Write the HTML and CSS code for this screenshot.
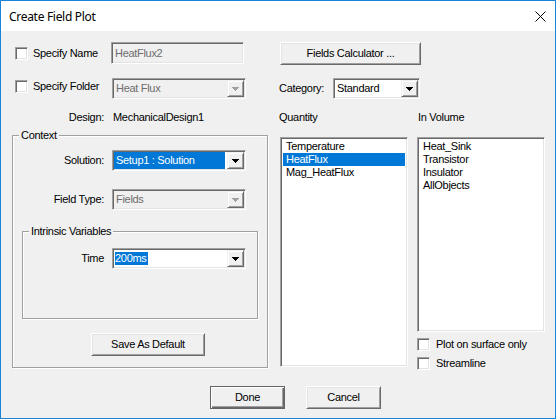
FILE: index.html
```html
<!DOCTYPE html>
<html>
<head>
<meta charset="utf-8">
<link rel="stylesheet" href="styles.css">
</head>
<body>
<div class="window">
  <div class="titlebar">
    <span class="title">Create Field Plot</span>
    <svg class="close" width="11" height="11" viewBox="0 0 11 11"><path d="M0.5 0.5 L10.5 10.5 M10.5 0.5 L0.5 10.5" stroke="#000" stroke-width="1" fill="none"/></svg>
  </div>
  <div class="body">
    <div class="left">
      <div class="row r-name">
        <label class="check"><span class="cb"></span><span>Specify Name</span></label>
        <div class="textbox disabled">HeatFlux2</div>
      </div>
      <div class="row r-folder">
        <label class="check check-top"><span class="cb"></span><span>Specify Folder</span></label>
        <div class="combo disabled shift1">
          <span class="val">Heat Flux</span>
          <span class="dd"><svg width="7" height="4" viewBox="0 0 7 4"><path d="M0 0h7v1H0zM1 1h5v1H1zM2 2h3v1H2zM3 3h1v1H3z"/></svg></span>
        </div>
      </div>
      <div class="row r-design">
        <span class="design-lbl">Design:</span>
        <span class="design-val">MechanicalDesign1</span>
      </div>
      <fieldset class="group context">
        <legend>Context</legend>
        <div class="ctx-inner">
          <div class="field-row">
            <span class="flbl">Solution:</span>
            <div class="combo">
              <span class="val sel">Setup1 : Solution</span>
              <span class="dd"><svg width="7" height="4" viewBox="0 0 7 4"><path d="M0 0h7v1H0zM1 1h5v1H1zM2 2h3v1H2zM3 3h1v1H3z"/></svg></span>
            </div>
          </div>
          <div class="field-row r-ftype">
            <span class="flbl">Field Type:</span>
            <div class="combo disabled">
              <span class="val">Fields</span>
              <span class="dd"><svg width="7" height="4" viewBox="0 0 7 4"><path d="M0 0h7v1H0zM1 1h5v1H1zM2 2h3v1H2zM3 3h1v1H3z"/></svg></span>
            </div>
          </div>
          <fieldset class="group intrinsic">
            <legend>Intrinsic Variables</legend>
            <div class="int-inner">
              <div class="field-row">
                <span class="flbl flbl-time">Time</span>
                <div class="combo">
                  <span class="val"><span class="hl">200ms</span></span>
                  <span class="dd"><svg width="7" height="4" viewBox="0 0 7 4"><path d="M0 0h7v1H0zM1 1h5v1H1zM2 2h3v1H2zM3 3h1v1H3z"/></svg></span>
                </div>
              </div>
            </div>
          </fieldset>
          <button class="btn btn-save">Save As Default</button>
        </div>
      </fieldset>
    </div>
    <div class="right">
      <button class="btn btn-calc">Fields Calculator ...</button>
      <div class="row r-cat">
        <span class="cat-lbl">Category:</span>
        <div class="combo combo-cat">
          <span class="val">Standard</span>
          <span class="dd"><svg width="7" height="4" viewBox="0 0 7 4"><path d="M0 0h7v1H0zM1 1h5v1H1zM2 2h3v1H2zM3 3h1v1H3z"/></svg></span>
        </div>
      </div>
      <div class="row r-heads">
        <span class="qty-lbl">Quantity</span>
        <span>In Volume</span>
      </div>
      <div class="lists">
        <div class="listbox list-qty">
          <div class="item">Temperature</div>
          <div class="item selected">HeatFlux</div>
          <div class="item">Mag_HeatFlux</div>
        </div>
        <div class="vol-col">
          <div class="listbox list-vol">
            <div class="item">Heat_Sink</div>
            <div class="item">Transistor</div>
            <div class="item">Insulator</div>
            <div class="item">AllObjects</div>
          </div>
          <label class="check2"><span class="cb"></span><span>Plot on surface only</span></label>
          <label class="check2"><span class="cb"></span><span>Streamline</span></label>
        </div>
      </div>
    </div>
  </div>
  <div class="footer">
    <button class="btn btn-default">Done</button>
    <button class="btn btn-cancel">Cancel</button>
  </div>
</div>
</body>
</html>
```

FILE: styles.css
```css
* { box-sizing: border-box; }

body {
  margin: 0;
  font-family: "Liberation Sans", Arial, sans-serif;
  font-size: 11px;
  line-height: 13px;
  color: #000;
  letter-spacing: -0.3px;
}

.window {
  width: 556px;
  height: 419px;
  border: 1px solid #1883d7;
  background: #f0f0f0;
  display: flex;
  flex-direction: column;
}

.titlebar {
  height: 30px;
  flex: none;
  background: #fff;
  display: flex;
  align-items: center;
  padding-left: 8px;
  padding-right: 9px;
}

.title {
  font-family: "Noto Sans", "Open Sans", sans-serif;
  font-size: 12px;
  letter-spacing: -0.3px;
  color: #000;
}

.close { margin-left: auto; }

.body {
  display: flex;
  padding-left: 11px;
}

.left {
  width: 257px;
  display: flex;
  flex-direction: column;
}

.row { display: flex; align-items: center; }

.r-name { margin-top: 11px; height: 22px; }
.r-folder { margin-top: 14px; height: 21px; align-items: flex-start; }
.r-design { margin-top: 12px; height: 13px; }

.check {
  width: 99px;
  display: flex;
  align-items: center;
  padding-left: 3px;
  gap: 5px;
}
.check-top { margin-top: 2px; }

.cb {
  width: 13px;
  height: 13px;
  flex: none;
  background: #fff;
  border: 1px solid;
  border-color: #a0a0a0 #fff #fff #a0a0a0;
  box-shadow: inset 1px 1px 0 #696969, inset -1px -1px 0 #e3e3e3;
}

.textbox {
  width: 133px;
  height: 22px;
  border: 1px solid;
  border-color: #a0a0a0 #fff #fff #a0a0a0;
  box-shadow: inset 1px 1px 0 #696969, inset -1px -1px 0 #e3e3e3;
  background: #fff;
  padding: 0 3px;
  display: flex;
  align-items: center;
}

.disabled { background: #f0f0f0; color: #6d6d6d; }

.combo {
  width: 134px;
  height: 21px;
  border: 1px solid;
  border-color: #a0a0a0 #fff #fff #a0a0a0;
  box-shadow: inset 1px 1px 0 #696969, inset -1px -1px 0 #e3e3e3;
  background: #fff;
  padding: 1px;
  display: flex;
}
.combo.disabled { background: #f0f0f0; }
.shift1 { margin-left: 1px; }

.val {
  flex: 1;
  display: flex;
  align-items: center;
  padding-left: 2px;
  margin-right: 2px;
  white-space: nowrap;
}
.val.sel { background: #0078d7; color: #fff; }
.hl { background: #0078d7; color: #fff; padding: 0 1px 0 0; margin-left: -1px; }

.dd {
  width: 17px;
  height: 17px;
  flex: none;
  background: #f0f0f0;
  border: 1px solid;
  border-color: #f0f0f0 #696969 #696969 #f0f0f0;
  box-shadow: inset 1px 1px 0 #fff, inset -1px -1px 0 #a0a0a0;
  display: flex;
  align-items: center;
  justify-content: center;
}
.dd svg { fill: #000; display: block; }
.disabled .dd svg { fill: #a0a0a0; }

.design-lbl { width: 92px; text-align: right; }
.design-val { margin-left: 9px; }

.group {
  margin: 0;
  padding: 0;
  border: 1px solid #a0a0a0;
  box-shadow: inset 1px 1px 0 #fff, 1px 1px 0 #fff;
  min-width: 0;
}
.group legend {
  margin-left: 6px;
  padding: 0 2px;
  background: #f0f0f0;
  line-height: 13px;
}

.context { margin-top: 5px; width: 256px; }
.ctx-inner { padding: 8px 0 11px; display: flex; flex-direction: column; }

.field-row { display: flex; align-items: center; height: 21px; }
.flbl { width: 91px; text-align: right; margin-right: 8px; }
.r-ftype { margin-top: 18px; }

.intrinsic { margin-top: 15px; margin-left: 9px; width: 236px; }
.int-inner { padding: 10px 0 49px; }
.flbl-time { width: 81px; }

.btn {
  font: inherit;
  letter-spacing: inherit;
  color: #000;
  background: #f0f0f0;
  height: 23px;
  padding: 0;
  border: 1px solid;
  border-color: #fff #696969 #696969 #fff;
  box-shadow: inset 1px 1px 0 #e3e3e3, inset -1px -1px 0 #a0a0a0;
}

.btn-save { width: 114px; margin-top: 14px; margin-left: 78px; }

.right {
  margin-left: 10px;
  width: 267px;
  display: flex;
  flex-direction: column;
}

.btn-calc { width: 141px; margin-top: 11px; margin-left: 1px; }

.r-cat { margin-top: 13px; height: 21px; }
.cat-lbl { width: 54px; }
.combo-cat { width: 87px; }

.r-heads { margin-top: 12px; height: 13px; }
.qty-lbl { width: 139px; }

.lists { display: flex; margin-top: 13px; }

.listbox {
  width: 128px;
  background: #fff;
  border: 1px solid;
  border-color: #a0a0a0 #fff #fff #a0a0a0;
  box-shadow: inset 1px 1px 0 #696969, inset -1px -1px 0 #e3e3e3;
  padding: 2px;
}
.list-qty { height: 230px; margin-left: 1px; }
.list-vol { height: 195px; }

.item { height: 13px; line-height: 13px; padding-left: 3px; white-space: nowrap; }
.item.selected { background: #0078d7; color: #fff; }

.vol-col { margin-left: 9px; display: flex; flex-direction: column; }

.check2 {
  display: flex;
  align-items: center;
  gap: 6px;
  margin-top: 6px;
  height: 13px;
}

.footer {
  display: flex;
  margin-top: 16px;
  padding-left: 209px;
  gap: 21px;
}

.btn-default, .btn-cancel { width: 75px; }
.btn-default {
  border-color: #646464;
  box-shadow: inset 1px 1px 0 #fff, inset -1px -1px 0 #696969, inset -2px -2px 0 #a0a0a0;
}
```
